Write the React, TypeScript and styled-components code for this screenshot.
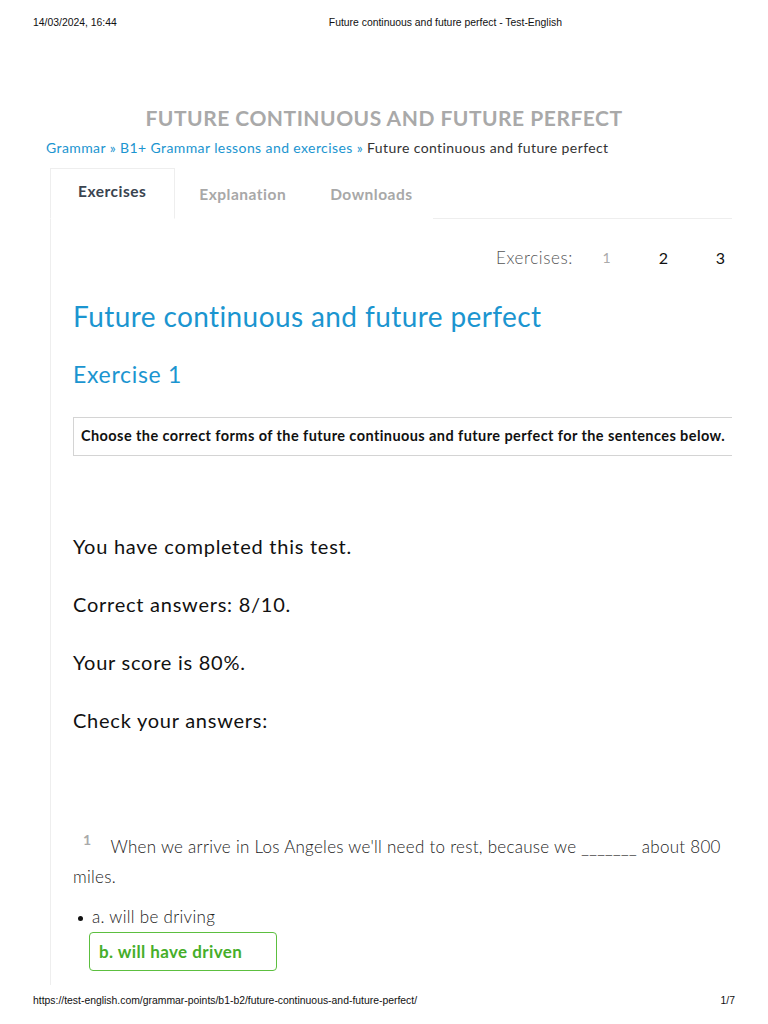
import React from "react";
import styled, { createGlobalStyle } from "styled-components";

const Global = createGlobalStyle`
  html, body { margin: 0; padding: 0; background: #fff; }
  body { font-family: Lato, "Open Sans", sans-serif; color: #222; }
  * { box-sizing: border-box; }
`;

const Page = styled.div`
  width: 768px;
  height: 1024px;
  display: flex;
  flex-direction: column;
  overflow: hidden;
`;

const PrintBar = styled.div`
  height: 44px;
  padding: 0 33px;
  display: flex;
  align-items: center;
  font-family: "Liberation Sans", Arial, sans-serif;
  font-size: 10.4px;
  color: #111;
`;

const PrintTitle = styled.span`
  margin-left: 212px;
`;

const PrintFooter = styled(PrintBar)`
  height: 30px;
  margin-top: auto;
  margin-bottom: 9px;
  justify-content: space-between;
  padding-right: 33px;
`;

const Main = styled.main`
  width: 732px;
  overflow: hidden;
  flex: 1;
  display: flex;
  flex-direction: column;
`;

const SiteTitle = styled.h1`
  margin: 62px 0 0;
  width: 768px;
  text-align: center;
  font-size: 21px;
  line-height: 24px;
  font-weight: 700;
  color: #a9a9a9;
  letter-spacing: 0.5px;
`;

const Crumbs = styled.nav`
  margin: 8px 0 0 46px;
  font-size: 14px;
  line-height: 20px;
  letter-spacing: 0.4px;
  color: #333;
  white-space: nowrap;
`;

const Crumb = styled.a`
  color: #1b95d0;
  text-decoration: none;
`;

const Tabs = styled.div`
  margin: 10px 0 0 50px;
  width: 760px;
  display: flex;
  border-bottom: 1px solid #eee;
`;

const Tab = styled.div<{ $active?: boolean }>`
  height: 51px;
  padding: ${(p) => (p.$active ? "0 28px 5px 27px" : "0 19px 0 23px")};
  display: flex;
  align-items: center;
  font-size: 15.5px;
  letter-spacing: 0.5px;
  font-weight: 700;
  color: ${(p) => (p.$active ? "#3a4450" : "#a8a8a8")};
  background: #fff;
  border: 1px solid ${(p) => (p.$active ? "#eee" : "transparent")};
  border-bottom: ${(p) => (p.$active ? "1px solid #fff" : "none")};
  margin-bottom: -1px;
`;

const Panel = styled.section`
  margin-left: 50px;
  width: 710px;
  flex: 1;
  border-left: 1px solid #eee;
  padding: 0 0 0 22px;
  display: flex;
  flex-direction: column;
`;

const ExNav = styled.div`
  margin-top: 26px;
  height: 24px;
  display: flex;
  justify-content: flex-end;
  align-items: center;
  padding-right: 11px;
  font-size: 17px;
`;

const ExLabel = styled.span`
  font-weight: 300;
  letter-spacing: 0.6px;
  color: #555;
  margin-right: 5px;
`;

const ExNum = styled.span<{ $current?: boolean }>`
  width: 57px;
  text-align: center;
  font-size: ${(p) => (p.$current ? "14px" : "16px")};
  color: ${(p) => (p.$current ? "#aaa" : "#111")};
`;

const Heading = styled.h2`
  margin: 30px 0 0;
  font-size: 28px;
  line-height: 34px;
  letter-spacing: 0.4px;
  font-weight: 400;
  color: #1b95d0;
  white-space: nowrap;
`;

const SubHeading = styled.h3`
  margin: 27px 0 0;
  font-size: 23px;
  line-height: 28px;
  letter-spacing: 0.7px;
  font-weight: 400;
  color: #1b95d0;
`;

const Instruction = styled.div`
  margin-top: 29px;
  width: 700px;
  height: 39px;
  border: 1px solid #d4d4d4;
  padding: 0 7px;
  font-size: 14.5px;
  line-height: 35px;
  letter-spacing: 0.42px;
  font-weight: 700;
  color: #111;
  white-space: nowrap;
`;

const Result = styled.p<{ $first?: boolean }>`
  margin: ${(p) => (p.$first ? "78px" : "34px")} 0 0;
  font-size: 20px;
  line-height: 24px;
  letter-spacing: 0.75px;
  font-weight: 400;
  color: #111;
`;

const Question = styled.p`
  margin: 100px 0 0;
  width: 650px;
  font-size: 17px;
  line-height: 30px;
  letter-spacing: 0.28px;
  font-weight: 300;
  color: #222;
`;

const QNum = styled.span`
  display: inline-block;
  margin: 0 19px 0 10px;
  font-size: 14px;
  font-weight: 700;
  color: #aaa;
  vertical-align: top;
  line-height: 16px;
`;

const Options = styled.ul`
  margin: 13px 0 0;
  padding: 0 0 0 19px;
  list-style: none;
`;

const Option = styled.li`
  position: relative;
  font-size: 17px;
  line-height: 24px;
  letter-spacing: 0.3px;
  font-weight: 300;
  color: #222;
  &::before {
    content: "";
    position: absolute;
    left: -14px;
    top: 11px;
    width: 5px;
    height: 5px;
    border-radius: 50%;
    background: #111;
  }
`;

const CorrectOption = styled.div`
  margin: 3px 0 0 16px;
  width: 188px;
  height: 39px;
  border: 1px solid #5cbf3f;
  border-radius: 4px;
  padding: 0 9px;
  display: flex;
  align-items: center;
  font-size: 17px;
  letter-spacing: 0.4px;
  font-weight: 700;
  color: #46ae2a;
`;

export default function App() {
  return (
    <Page>
      <Global />
      <PrintBar>
        <span>14/03/2024, 16:44</span>
        <PrintTitle>Future continuous and future perfect - Test-English</PrintTitle>
      </PrintBar>
      <Main>
        <SiteTitle>FUTURE CONTINUOUS AND FUTURE PERFECT</SiteTitle>
        <Crumbs>
          <Crumb>Grammar</Crumb> <Crumb>»</Crumb> <Crumb>B1+ Grammar lessons and exercises</Crumb>{" "}
          <Crumb>»</Crumb> Future continuous and future perfect
        </Crumbs>
        <Tabs>
          <Tab $active>Exercises</Tab>
          <Tab>Explanation</Tab>
          <Tab>Downloads</Tab>
        </Tabs>
        <Panel>
          <ExNav>
            <ExLabel>Exercises:</ExLabel>
            <ExNum $current>1</ExNum>
            <ExNum>2</ExNum>
            <ExNum>3</ExNum>
          </ExNav>
          <Heading>Future continuous and future perfect</Heading>
          <SubHeading>Exercise 1</SubHeading>
          <Instruction>
            Choose the correct forms of the future continuous and future perfect for the sentences below.
          </Instruction>
          <Result $first>You have completed this test.</Result>
          <Result>Correct answers: 8/10.</Result>
          <Result>Your score is 80%.</Result>
          <Result>Check your answers:</Result>
          <Question>
            <QNum>1</QNum>When we arrive in Los Angeles we'll need to rest, because we _______ about 800 miles.
          </Question>
          <Options>
            <Option>a. will be driving</Option>
          </Options>
          <CorrectOption>b. will have driven</CorrectOption>
        </Panel>
      </Main>
      <PrintFooter>
        <span>https://test-english.com/grammar-points/b1-b2/future-continuous-and-future-perfect/</span>
        <span>1/7</span>
      </PrintFooter>
    </Page>
  );
}
